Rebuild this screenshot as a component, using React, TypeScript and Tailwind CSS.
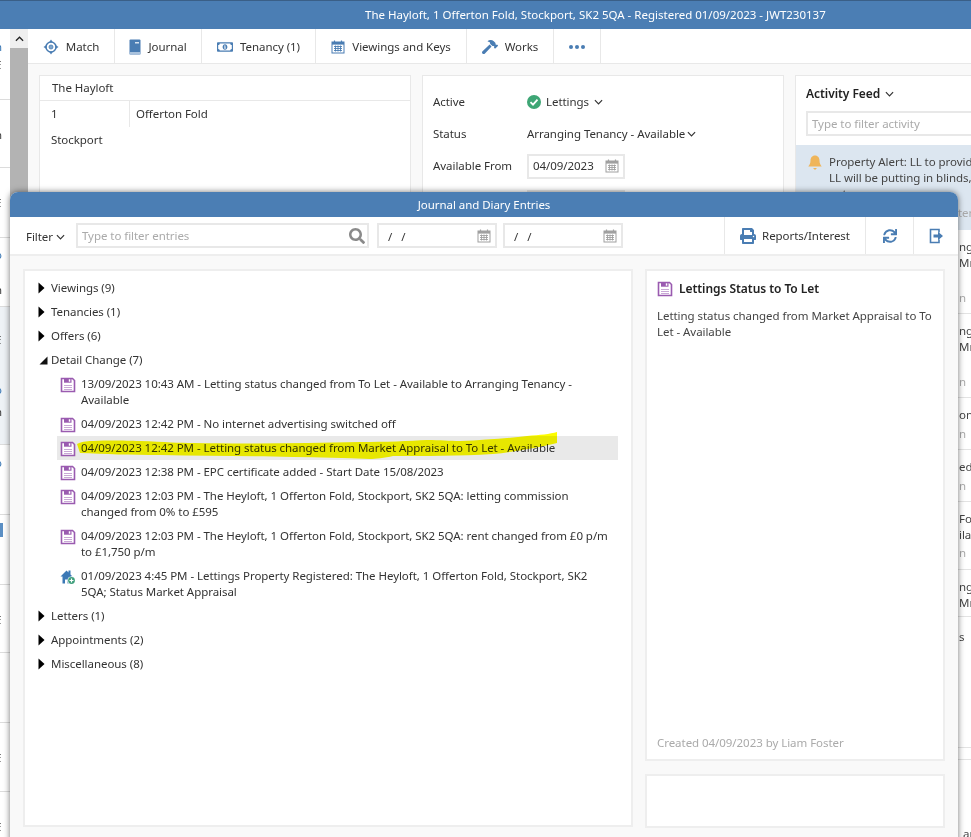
import React from "react";
import { FaHammer, FaPrint, FaSync, FaSearch, FaRegMoneyBillAlt } from "react-icons/fa";

const Floppy = ({ className = "" }: { className?: string }) => (
  <svg viewBox="0 0 16 16" className={className} width="16" height="16">
    <path d="M1.500 1.500h11l2 2v11h-13z" fill="#fff" stroke="#9a5bb0" strokeWidth="1.6" />
    <rect x="4" y="1.500" width="7.500" height="4.200" fill="#9a5bb0" />
    <rect x="8.800" y="2.300" width="1.500" height="2.400" fill="#fff" />
    <path d="M4 8.500h8M4 10.500h8M4 12.500h8" stroke="#c9a8d6" strokeWidth="1" />
  </svg>
);

const Calendar = ({ color = "#a0a0a0", size = 14 }: { color?: string; size?: number }) => (
  <svg viewBox="0 0 14 14" width={size} height={size}>
    <rect x="1" y="2" width="12" height="11" fill="#fff" stroke={color} strokeWidth="1" />
    <rect x="1" y="2" width="12" height="2.600" fill={color} />
    <path d="M3.500 0.500v3M10.500 0.500v3" stroke={color} strokeWidth="1.200" />
    <path d="M3 6.500h8M3 8.500h8M3 10.500h8M4.500 5.500v6M7 5.500v6M9.500 5.500v6" stroke={color} strokeWidth="0.900" />
  </svg>
);

const Target = () => (
  <svg viewBox="0 0 16 16" width="16" height="16">
    <path d="M8 0.500 10 3.500H6zM8 15.500 6 12.500h4zM0.500 8 3.500 6v4zM15.500 8 12.500 10V6z" fill="#4a7db3" />
    <circle cx="8" cy="8" r="5" fill="none" stroke="#4a7db3" strokeWidth="1.500" />
    <circle cx="8" cy="8" r="2" fill="#7fa5cc" stroke="#4a7db3" strokeWidth="0.800" />
  </svg>
);

const Book = () => (
  <svg viewBox="0 0 12 16" width="12" height="16">
    <rect x="0.500" y="0.500" width="11" height="15" rx="1" fill="#4a7db3" />
    <rect x="0.500" y="13" width="11" height="2.500" fill="#a9c2dd" />
    <rect x="6" y="3" width="4" height="1.500" fill="#d7e3ef" />
  </svg>
);

const ExitIcon = () => (
  <svg viewBox="0 0 16 16" width="16" height="16">
    <path d="M11 4.500V1.500H2.500v13H11v-3" fill="none" stroke="#4a7db3" strokeWidth="1.600" />
    <path d="M5.500 6.500H10V3.700L15 8l-5 4.300V9.500H5.500z" fill="#4a7db3" />
  </svg>
);

const House = () => (
  <svg viewBox="0 0 16 16" width="16" height="16">
    <path d="M0.500 7.500 6.500 1.500l2 2V1.500h2v4l2 2H11v7H7.500v-4H5v4H2.500v-7z" fill="#3b78b5" />
    <circle cx="11.500" cy="11.500" r="4" fill="#fff" />
    <circle cx="11.500" cy="11.500" r="3.400" fill="#3f9f7c" />
    <path d="M9.500 11.500h4M11.500 9.500v4" stroke="#fff" strokeWidth="1.200" />
  </svg>
);

const Caret = () => (
  <svg viewBox="0 0 7 12" width="7" height="12">
    <path d="M0.500 0.500 6.500 6 0.500 11.500z" fill="#000" />
  </svg>
);
const CaretOpen = () => (
  <svg viewBox="0 0 9 9" width="9" height="9" className="ml-px">
    <path d="M8.500 0.500v8H0.500z" fill="#111" />
  </svg>
);
const Chev = () => (
  <svg viewBox="0 0 10 6" width="9" height="6">
    <path d="M1 1l4 4 4-4" fill="none" stroke="#333" strokeWidth="1.300" />
  </svg>
);

const Tab = ({ icon, label, w }: { icon: React.ReactNode; label?: string; w: string }) => (
  <div className={`flex h-full items-center justify-center gap-[7px] border-r border-[#e8e8e8] pt-[2px] ${w}`}>
    {icon}
    {label && <span>{label}</span>}
  </div>
);

const Group = ({ label }: { label: string }) => (
  <div className="flex h-6 items-center">
    <span className="flex w-[13px] justify-start"><Caret /></span>
    <span>{label}</span>
  </div>
);

const Entry = ({ text, icon, selected }: { text: string; icon?: React.ReactNode; selected?: boolean }) => (
  <div className={`flex gap-[5px] py-1 pl-[3px] pr-2 ${selected ? "bg-[#e9e9e9]" : ""}`}>
    <span className="-mb-px mt-px h-4 w-4 shrink-0">{icon ?? <Floppy />}</span>
    <span className="w-[532px]">{text}</span>
  </div>
);

const LeftRow = ({ h, pt = "", cls = "", children }: { h: string; pt?: string; cls?: string; children?: React.ReactNode }) => (
  <div className={`overflow-hidden border-b border-[#dcdcdc] pl-0 ${h} ${pt} ${cls}`}>{children}</div>
);
const Frag = ({ t, mt = "", blue }: { t: string; mt?: string; blue?: boolean }) => (
  <div className={`-ml-[5px] ${mt} ${blue ? "text-[#3b78b5]" : "text-[#444]"}`}>{t}</div>
);

const RightRow = ({ h, pt = "pt-[9px]", lines, gap }: { h: string; pt?: string; lines: string[]; gap?: string }) => (
  <div className={`overflow-hidden border-b border-[#e3e3e3] pl-px ${h} ${pt}`}>
    {lines.map((l) => <div key={l}>{l}</div>)}
    {gap && <div className={`text-[#aaa] ${gap}`}>n</div>}
  </div>
);

export default function App() {
  return (
    <div className="relative h-[837px] w-[971px] overflow-hidden bg-[#f9f9f9] text-[11.5px] leading-4 tracking-[-0.05px] text-[#333]" style={{ fontFamily: '"Noto Sans", "Open Sans", sans-serif' }}>
      {/* Main window */}
      <div className="border-t border-[#3a5f87] bg-[#4b7eb4] tracking-normal text-white">
        <div className="flex h-7 items-center pl-[365px]">The Hayloft, 1 Offerton Fold, Stockport, SK2 5QA - Registered 01/09/2023 - JWT230137</div>
      </div>
      <div className="flex h-[808px]">
        <div className="flex w-[10px] shrink-0 flex-col overflow-hidden bg-white">
          <LeftRow h="h-[71px]" pt="pt-[10px]"><Frag t="n" blue /><Frag t="E" mt="mt-[2px]" /></LeftRow>
          <LeftRow h="h-[68px]" pt="pt-[27px]"><Frag t="n" /></LeftRow>
          <LeftRow h="h-[70px]" pt="pt-[27px]"><Frag t="E" /></LeftRow>
          <LeftRow h="h-[69px]" pt="pt-[9px]"><Frag t="o" blue /><Frag t="n" mt="mt-[19px]" /></LeftRow>
          <LeftRow h="h-[138px]" pt="pt-[25px]" cls="bg-[#eef2f6]"><Frag t="E" /><Frag t="o" mt="mt-[34px]" blue /><Frag t="n" mt="mt-[6px]" /></LeftRow>
          <LeftRow h="h-[70px]" pt="pt-[10px]"><Frag t="o" blue /></LeftRow>
          <LeftRow h="h-[70px]" pt="pt-[8px]"><div className="h-[14px] w-[3px] bg-[#5b8fc4]" /></LeftRow>
          <LeftRow h="h-[68px]" pt="pt-[27px]"><Frag t="E" /></LeftRow>
          <LeftRow h="h-[70px]" />
          <LeftRow h="h-[69px]" pt="pt-[27px]"><Frag t="E" /></LeftRow>
          <div className="flex-1 pt-[27px]"><Frag t="E" /></div>
        </div>
        <div className="w-[18px] shrink-0 bg-[#f0f0f0]">
          <div className="flex h-[19px] items-center justify-center bg-[#efefef]">
            <svg viewBox="0 0 10 6" width="9" height="6"><path d="M1 5l4-4 4 4" fill="none" stroke="#222" strokeWidth="1.400" /></svg>
          </div>
          <div className="h-[200px] bg-[#b3b3b3]" />
        </div>
        <div className="w-[943px] shrink-0 overflow-hidden">
          <div className="flex h-[35px] border-b border-[#e8e8e8] bg-white">
            <Tab w="w-[87px]" icon={<Target />} label="Match" />
            <Tab w="w-[87px]" icon={<Book />} label="Journal" />
            <Tab w="w-[114px]" icon={<FaRegMoneyBillAlt className="text-[16px] text-[#4a7db3]" />} label="Tenancy (1)" />
            <Tab w="w-[151px]" icon={<Calendar color="#4a7db3" />} label="Viewings and Keys" />
            <Tab w="w-[87px]" icon={<FaHammer className="text-[16px] text-[#4a7db3]" />} label="Works" />
            <Tab w="w-[47px]" icon={<span className="flex gap-[2px]"><i className="h-1 w-1 rounded-full bg-[#4a7db3]" /><i className="h-1 w-1 rounded-full bg-[#4a7db3]" /><i className="h-1 w-1 rounded-full bg-[#4a7db3]" /></span>} />
          </div>
          <div className="flex gap-[11px] pl-[11px] pt-[11px]">
            <div className="h-[400px] w-[372px] shrink-0 border border-[#e8e8e8] bg-white">
              <div className="flex h-[25px] items-center border-b border-[#e8e8e8] pl-3">The Hayloft</div>
              <div className="flex h-[26px]">
                <div className="flex w-[90px] items-center border-r border-[#e8e8e8] pl-[11px]">1</div>
                <div className="flex items-center pl-[6px]">Offerton Fold</div>
              </div>
              <div className="flex h-[26px] items-center pl-[11px]">Stockport</div>
            </div>
            <div className="h-[400px] w-[362px] shrink-0 border border-[#e8e8e8] bg-white pl-[10px] pt-[10px]">
              <div className="flex h-[32px] items-center">
                <span className="w-[94px]">Active</span>
                <svg viewBox="0 0 14 14" width="14" height="14" className="mr-[5px]"><circle cx="7" cy="7" r="7" fill="#3ea675" /><path d="M3.500 7.200l2.500 2.500 4.500-5" fill="none" stroke="#fff" strokeWidth="1.800" /></svg>
                <span className="mr-[5px]">Lettings</span><Chev />
              </div>
              <div className="flex h-[32px] items-center">
                <span className="w-[94px]">Status</span>
                <span className="mr-[2px]">Arranging Tenancy - Available</span><Chev />
              </div>
              <div className="flex h-[32px] items-center">
                <span className="w-[94px]">Available From</span>
                <div className="flex h-[25px] w-[98px] items-center justify-between border-2 border-[#e8e8e8] px-1"><span>04/09/2023</span><Calendar /></div>
              </div>
              <div className="ml-[94px] mt-2 h-[25px] w-[98px] border-2 border-[#e8e8e8]" />
            </div>
            <div className="h-[700px] w-[190px] shrink-0 border border-[#e8e8e8] bg-white">
              <div className="flex items-center gap-[5px] pl-[10px] pt-[10px] text-[12px] font-semibold text-[#222]">Activity Feed <Chev /></div>
              <div className="ml-[10px] mt-[9px] flex h-[25px] items-center border-2 border-[#e8e8e8] pl-1 text-[#aaa]">Type to filter activity</div>
              <div className="mt-[9px] flex h-[85px] gap-[7px] overflow-hidden bg-[#dce6f0] pl-3 pt-[9px]">
                <svg viewBox="0 0 14 16" width="14" height="16" className="mt-px shrink-0"><path d="M7 0.500c3 0 4.500 2.500 4.500 5 0 3 1 4.500 2.200 6H0.300c1.200-1.500 2.200-3 2.200-6 0-2.500 1.500-5 4.500-5z" fill="#efb55a" /><path d="M5 13h4l-2 2z" fill="#efb55a" /></svg>
                <div className="whitespace-pre text-[#444]">{"Property Alert: LL to provide\nLL will be putting in blinds,\npets"}</div>
              </div>
            </div>
          </div>
        </div>
      </div>

      {/* Ends of the activity feed that stay visible beside the dialog */}
      <div className="absolute left-[958px] top-[192px] h-[645px] w-[13px] overflow-hidden text-[#444]">
        <div className="h-[38px] bg-[#dce6f0] pt-[13px] text-[#aaa]">ter</div>
        <div className="bg-white">
          <RightRow h="h-[84px]" lines={["ng", "Mr"]} gap="mt-[19px]" />
          <RightRow h="h-[84px]" lines={["ng", "Mr"]} gap="mt-[19px]" />
          <RightRow h="h-[52px]" lines={["on"]} gap="mt-[3px]" />
          <RightRow h="h-[52px]" lines={["ed"]} gap="mt-[3px]" />
          <RightRow h="h-[68px]" lines={["Fol", "ila"]} gap="mt-[2px]" />
          <RightRow h="h-[47px]" lines={["ng", "Mr"]} />
          <RightRow h="h-[131px]" pt="pt-[12px]" lines={["s"]} />
          <div className="h-[12px] border-b border-[#e3e3e3]" />
          <div className="h-[78px] bg-white pl-[5px] pt-[66px]">ar</div>
        </div>
      </div>

      {/* Dialog */}
      <div className="absolute left-[10px] top-[192px] h-[660px] w-[948px] overflow-hidden rounded-t-lg bg-[#f9f9f9] shadow-[0_0_6px_rgba(0,0,0,0.55)]">
        <div className="flex h-[25px] items-center justify-center bg-[#4b7eb4] text-white">Journal and Diary Entries</div>
        <div className="flex h-[39px] items-center border-b-2 border-[#eeeeee] bg-white">
          <div className="ml-4 flex w-[50px] items-center gap-[3px] pt-[2px]"><span>Filter</span><Chev /></div>
          <div className="flex h-[25px] w-[293px] items-center justify-between border-2 border-[#e8e8e8] pl-1 pr-[2px] text-[#aaa]">
            <span>Type to filter entries</span>
            <FaSearch className="text-[16px] text-[#8a8a8a]" />
          </div>
          <div className="ml-2 flex h-[25px] w-[120px] items-center justify-between border-2 border-[#e8e8e8] pl-[9px] pr-1">
            <span className="pt-[2px] [word-spacing:6px]">/ /</span><Calendar />
          </div>
          <div className="ml-[6px] flex h-[25px] w-[120px] items-center justify-between border-2 border-[#e8e8e8] pl-[9px] pr-1">
            <span className="pt-[2px] [word-spacing:6px]">/ /</span><Calendar />
          </div>
          <div className="ml-[101px] flex h-full w-[142px] items-center justify-center gap-[6px] border-x border-[#e8e8e8]">
            <FaPrint className="text-[16px] text-[#4a7db3]" /><span>Reports/Interest</span>
          </div>
          <div className="flex h-full w-[48px] items-center justify-center border-r border-[#e8e8e8]">
            <FaSync className="text-[14px] text-[#4a7db3]" />
          </div>
          <div className="flex h-full w-[43px] items-center justify-center"><ExitIcon /></div>
        </div>
        <div className="flex gap-3 px-[13px] pt-[13px]">
          <div className="relative h-[558px] w-[610px] border-2 border-[#eeeeee] bg-white pl-[13px] pt-[5px]">
            <Group label="Viewings (9)" />
            <Group label="Tenancies (1)" />
            <Group label="Offers (6)" />
            <div className="flex h-6 items-center">
              <span className="w-[13px]"><CaretOpen /></span><span>Detail Change (7)</span>
            </div>
            <div className="ml-[19px] w-[561px]">
              <Entry text="13/09/2023 10:43 AM - Letting status changed from To Let - Available to Arranging Tenancy - Available" />
              <Entry text="04/09/2023 12:42 PM - No internet advertising switched off" />
              <Entry selected text="04/09/2023 12:42 PM - Letting status changed from Market Appraisal to To Let - Available" />
              <Entry text="04/09/2023 12:38 PM - EPC certificate added - Start Date 15/08/2023" />
              <Entry text="04/09/2023 12:03 PM - The Heyloft, 1 Offerton Fold, Stockport, SK2 5QA: letting commission changed from 0% to £595" />
              <Entry text="04/09/2023 12:03 PM - The Heyloft, 1 Offerton Fold, Stockport, SK2 5QA: rent changed from £0 p/m to £1,750 p/m" />
              <Entry icon={<House />} text="01/09/2023 4:45 PM - Lettings Property Registered: The Heyloft, 1 Offerton Fold, Stockport, SK2 5QA; Status Market Appraisal" />
            </div>
            <Group label="Letters (1)" />
            <Group label="Appointments (2)" />
            <Group label="Miscellaneous (8)" />
            {/* Marker-pen highlight drawn over the selected row */}
            <svg className="pointer-events-none absolute left-[50px] top-[158px] mix-blend-multiply" width="490" height="32" viewBox="0 0 490 32">
              <path d="M2 15C8 12 14 12 18 12C40 11 60 12 65 12C90 13 105 14 118 14C180 15 230 14 285 13C310 13 335 12 352 11C365 11 375 12 385 12C410 11 435 9 452 7C465 6 475 5 482 3L482 14C465 18 440 23 418 25C385 27 350 27 318 27C310 29 300 30 295 30C270 29 245 28 218 28C170 27 130 27 85 26C55 26 30 25 5 24Z" fill="#fdfd00" />
            </svg>
          </div>
          <div className="flex w-[300px] flex-col gap-[13px]">
            <div className="flex h-[492px] flex-col justify-between border-2 border-[#eeeeee] bg-white px-[10px] pb-2 pt-[10px]">
              <div>
                <div className="flex items-center gap-[6px] text-[12px] font-semibold text-[#222]"><Floppy />Lettings Status to To Let</div>
                <p className="mt-[11px] text-[#444]">Letting status changed from Market Appraisal to To Let - Available</p>
              </div>
              <div className="text-[#aaa]">Created 04/09/2023 by Liam Foster</div>
            </div>
            <div className="h-[54px] border-2 border-[#eeeeee] bg-white" />
          </div>
        </div>
      </div>
    </div>
  );
}
